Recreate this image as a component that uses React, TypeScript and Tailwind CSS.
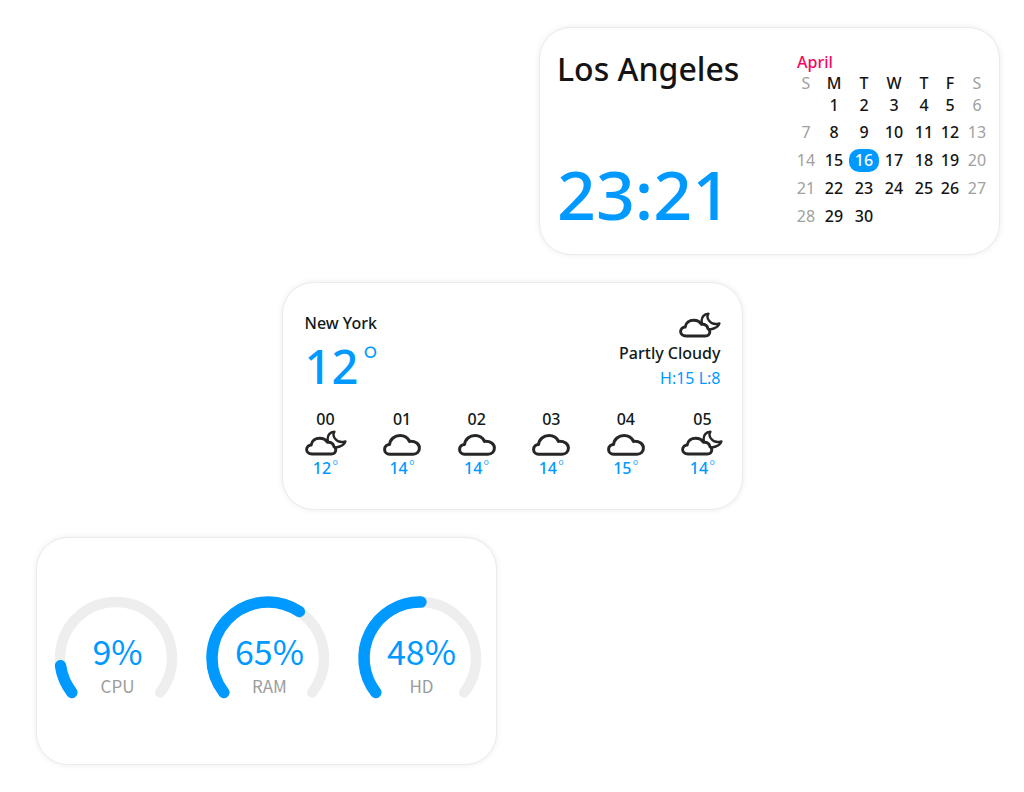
import { ReactNode } from "react";

function Card({ label, className, children }: { label: string; className: string; children: ReactNode }) {
  return (
    <section
      aria-label={label}
      className={`h-[228px] w-[461px] max-w-full rounded-[32px] border border-[#ebebeb] bg-white shadow-[0_0_6px_rgba(0,0,0,0.08)] ${className}`}
    >
      {children}
    </section>
  );
}

const dayNames = ["S", "M", "T", "W", "T", "F", "S"];
const weeks: (number | null)[][] = [
  [null, 1, 2, 3, 4, 5, 6],
  [7, 8, 9, 10, 11, 12, 13],
  [14, 15, 16, 17, 18, 19, 20],
  [21, 22, 23, 24, 25, 26, 27],
  [28, 29, 30, null, null, null, null],
];
const today = 16;

function dayColor(column: number) {
  return column === 0 || column === 6 ? "text-[#a0a0a0]" : "font-medium text-[#141414]";
}

function Calendar() {
  return (
    <table className="table-fixed border-collapse self-start text-center text-base leading-[22px]">
      <caption className="pl-1 text-left font-medium text-[#f5085f]">April</caption>
      <colgroup>
        <col className="w-[26px]" />
        <col className="w-[30px]" />
        <col className="w-[30px]" />
        <col className="w-[30px]" />
        <col className="w-[30px]" />
        <col className="w-[22px]" />
        <col className="w-[32px]" />
      </colgroup>
      <thead>
        <tr className="leading-[21px]">
          {dayNames.map((name, i) => (
            <th key={i} scope="col" className={`p-0 ${i === 0 || i === 6 ? "font-normal" : ""} ${dayColor(i)}`}>
              {name}
            </th>
          ))}
        </tr>
      </thead>
      <tbody>
        {weeks.map((week, w) => (
          <tr key={w} className={w === 0 ? "h-6 align-top" : "h-7 align-middle"}>
            {week.map((day, i) => (
              <td key={i} className={`p-0 ${dayColor(i)}`}>
                {day === today ? (
                  <span className="block h-[23px] rounded-[10px] bg-[#0099ff] leading-[23px] text-white">{day}</span>
                ) : (
                  day
                )}
              </td>
            ))}
          </tr>
        ))}
      </tbody>
    </table>
  );
}

type Sky = "cloud" | "night";

function SkyIcon({ sky }: { sky: Sky }) {
  return sky === "night" ? (
    <svg aria-hidden="true" width="42" height="26" viewBox="0 0 42 26" fill="none" stroke="#262626" strokeLinejoin="round">
      <path
        d="M29.4 1.8C25.4 2.2 22.8 5 22.6 8.8L23 12L30 17.6C35 17 39.4 15.2 40.4 11.4C36.6 12.6 32.4 11.8 30 8.6C28.2 6.2 28 3.8 29.4 1.8Z"
        strokeWidth="2.4"
      />
      <path
        d="M7 24C3.8 24 1.6 22 1.6 19.6C1.6 17 3.8 15.2 6.2 15C6.8 10.6 10.4 8.2 14.6 8.2C18.2 8.2 21 9.8 22.4 12.4C26 11.8 28.6 13.8 28.8 16.4C30.2 17.2 30.9 18.6 30.8 20C30.6 22.6 28.8 24 26.2 24Z"
        fill="white"
        strokeWidth="2.9"
      />
    </svg>
  ) : (
    <svg aria-hidden="true" width="38" height="22" viewBox="0 0 38 22" fill="none" stroke="#262626" strokeLinejoin="round">
      <path
        d="M6.6 20.2C3.6 20.2 1.6 18 1.6 15.4C1.6 12.6 3.8 10.6 6.6 10.4C7.2 5 11.6 1.6 17 1.6C21.4 1.6 24.8 3.8 26.4 7.4C32.6 7 36.4 10 36.4 14C36.4 17.8 33.8 20.2 30 20.2Z"
        strokeWidth="3"
      />
    </svg>
  );
}

const hours: { hour: string; sky: Sky; temp: string }[] = [
  { hour: "00", sky: "night", temp: "12" },
  { hour: "01", sky: "cloud", temp: "14" },
  { hour: "02", sky: "cloud", temp: "14" },
  { hour: "03", sky: "cloud", temp: "14" },
  { hour: "04", sky: "cloud", temp: "15" },
  { hour: "05", sky: "night", temp: "14" },
];

function Weather() {
  return (
    <div className="flex h-full flex-col justify-between pt-[29px] pr-[18px] pb-[30px] pl-[22px] text-base leading-[22px] font-medium text-[#0f1a1a]">
      <div className="flex justify-between">
        <div>
          <h2>New York</h2>
          <p className="mt-1 flex gap-1 text-[47px] leading-[56px] text-[#0099ff]">
            12<span className="text-[38px] leading-[44px] font-light">°</span>
          </p>
        </div>
        <div className="flex flex-col items-end pr-[3px]">
          <SkyIcon sky="night" />
          <p className="mt-1">Partly Cloudy</p>
          <p className="mt-[3px] font-normal text-[#0099ff]">H:15 L:8</p>
        </div>
      </div>
      <ul className="flex justify-between">
        {hours.map(({ hour, sky, temp }) => (
          <li key={hour} className="flex flex-col items-center">
            <span>{hour}</span>
            <span className="flex h-[26px] items-end">
              <SkyIcon sky={sky} />
            </span>
            <span className="mt-px flex gap-px text-[#0099ff]">
              {temp}
              <span className="text-sm leading-[18px] font-light">°</span>
            </span>
          </li>
        ))}
      </ul>
    </div>
  );
}

const radius = 56;
const sweep = 256;

function arcPoint(degrees: number) {
  const a = (degrees * Math.PI) / 180;
  return `${64 + radius * Math.cos(a)} ${64 + radius * Math.sin(a)}`;
}

function arc(length: number) {
  const start = 270 - sweep / 2;
  return `M${arcPoint(start)}A${radius} ${radius} 0 ${length > 180 ? 1 : 0} 1 ${arcPoint(start + length)}`;
}

function Gauge({ name, value, length }: { name: string; value: number; length: number }) {
  return (
    <div className="grid w-32 justify-items-center">
      <svg aria-hidden="true" className="col-start-1 row-start-1" width="128" height="128" viewBox="0 0 128 128" fill="none" strokeLinecap="round">
        <path d={arc(sweep)} stroke="#eeeeee" strokeWidth="10.5" />
        <path d={arc(length)} stroke="#0099ff" strokeWidth="11.5" />
      </svg>
      <div className="col-start-1 row-start-1 pt-[37px] pl-[3px] text-center font-['Noto_Sans_CJK_SC',sans-serif]">
        <p className="text-[34px] leading-10 text-[#0099ff]">{value}%</p>
        <p className="mt-[3px] text-[17px] leading-6 text-[#9c9c9c]">{name}</p>
      </div>
    </div>
  );
}

export default function App() {
  return (
    <main className="flex min-h-screen flex-col gap-[27px] bg-white px-6 py-[27px] font-['Noto_Sans',sans-serif]">
      <Card label="Clock" className="flex justify-between self-end pt-[23px] pr-1.5 pl-[17px]">
        <div className="flex flex-col justify-between pb-6 text-[#141414]">
          <h1 className="text-[32px] leading-9 font-medium">Los Angeles</h1>
          <time className="text-[68px] leading-[72px] font-medium text-[#0099ff]">23:21</time>
        </div>
        <Calendar />
      </Card>
      <Card label="Weather" className="self-center">
        <Weather />
      </Card>
      <Card label="System usage" className="ml-3 flex justify-between pt-14 pr-3 pl-[15px]">
        <Gauge name="CPU" value={9} length={30} />
        <Gauge name="RAM" value={65} length={162} />
        <Gauge name="HD" value={48} length={129} />
      </Card>
    </main>
  );
}
